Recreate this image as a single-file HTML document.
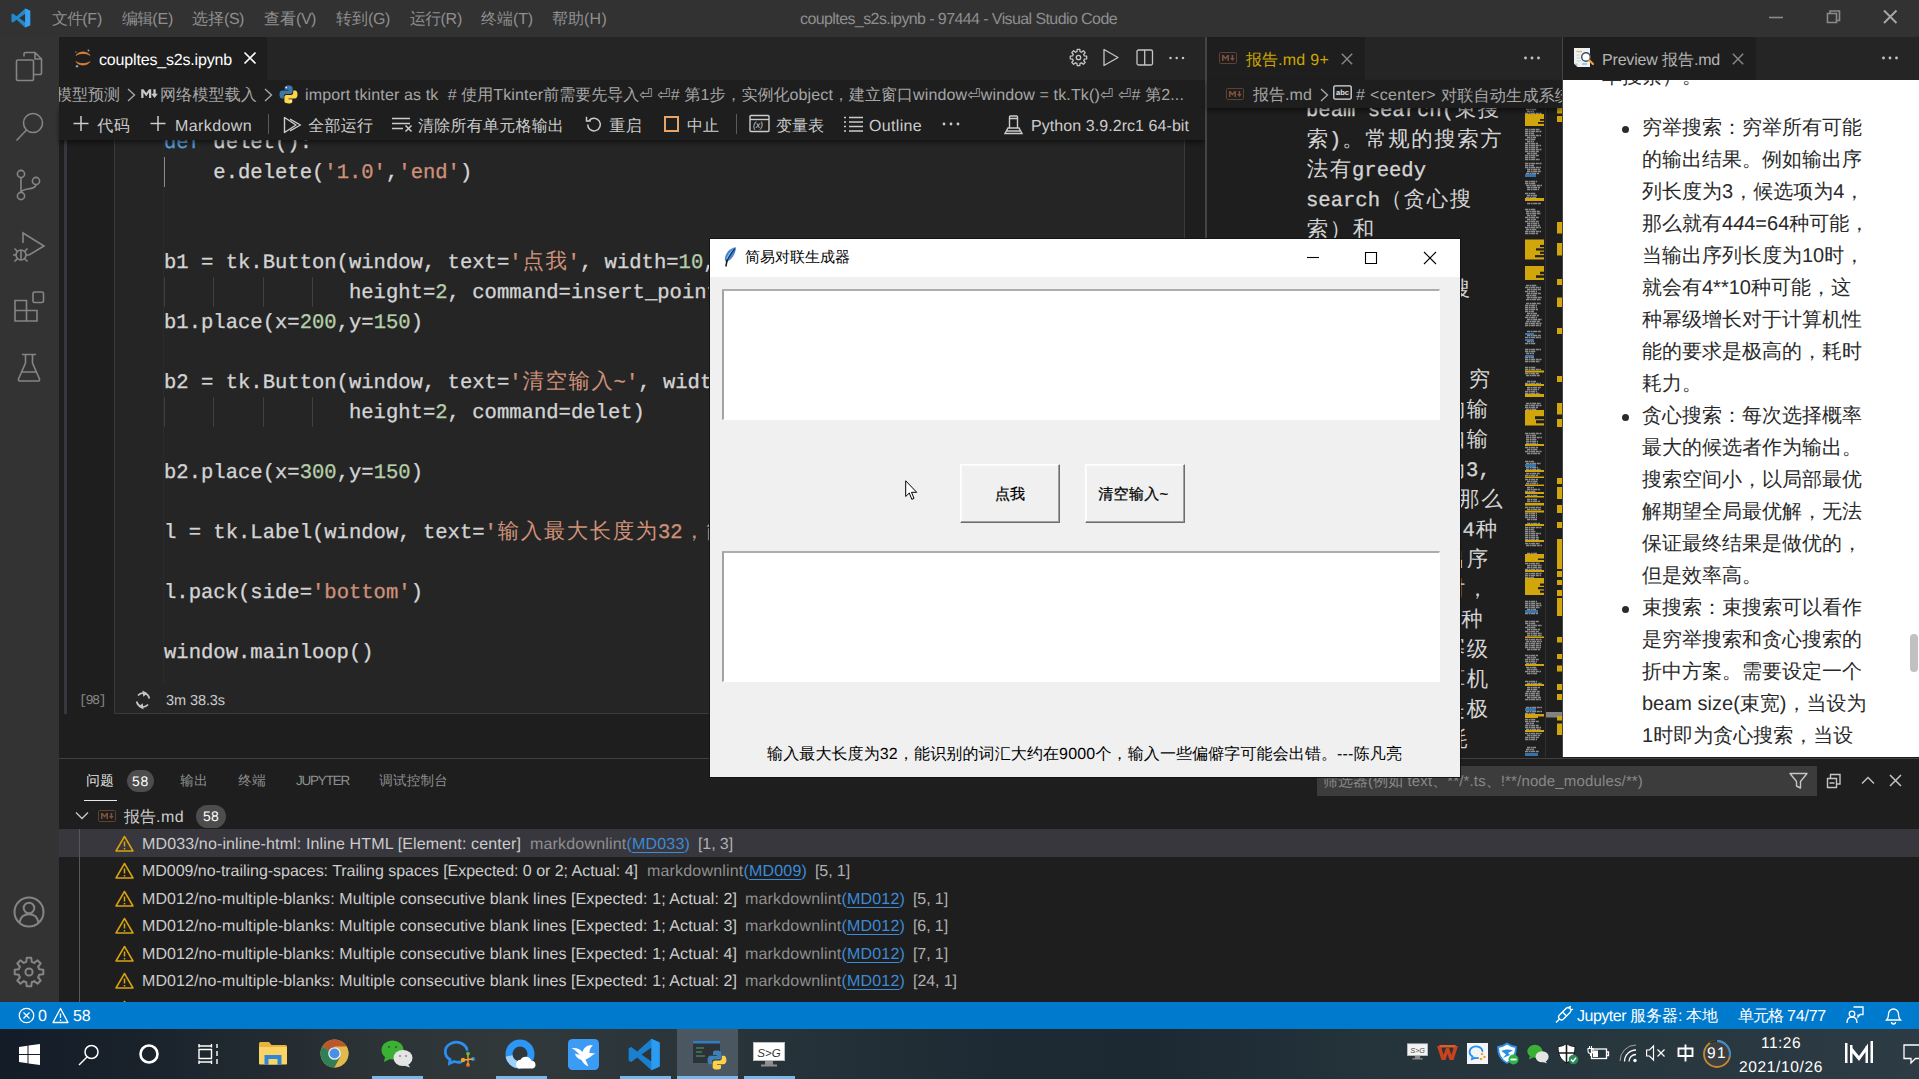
<!DOCTYPE html>
<html lang="zh">
<head>
<meta charset="utf-8">
<title>coupltes_s2s.ipynb - 97444 - Visual Studio Code</title>
<style>
*{box-sizing:border-box;margin:0;padding:0}
html,body{width:1919px;height:1079px;overflow:hidden;background:#1e1e1e}
body{font-family:"Liberation Sans",sans-serif;font-size:16px;color:#ccc;position:relative;text-rendering:geometricPrecision}
.abs{position:absolute}
.t{position:absolute;white-space:nowrap;line-height:1}
.mono{font-family:"Liberation Mono",monospace}
svg{position:absolute;overflow:visible}
/* ---------- major regions ---------- */
#titlebar{left:0;top:0;width:1919px;height:37px;background:#323233}
#activity{left:0;top:37px;width:59px;height:965px;background:#333333}
#g1tabs{left:59px;top:37px;width:1146px;height:43px;background:#252526}
#g1tab{left:59px;top:37px;width:208px;height:43px;background:#1e1e1e}
#g1crumb{left:59px;top:80px;width:1146px;height:28px;background:#1e1e1e}
#g1tool{left:59px;top:108px;width:1146px;height:32px;background:#1e1e1e}
#g1body{left:59px;top:140px;width:1146px;height:617px;background:#1e1e1e;overflow:hidden}
#g2tabs{left:1207px;top:37px;width:355px;height:43px;background:#252526}
#g2tab{left:1207px;top:37px;width:158px;height:43px;background:#1e1e1e}
#g2crumb{left:1207px;top:80px;width:355px;height:28px;background:#1e1e1e}
#g2body{left:1207px;top:108px;width:355px;height:649px;background:#1e1e1e;overflow:hidden}
#g3tabs{left:1563px;top:37px;width:356px;height:43px;background:#252526}
#g3tab{left:1563px;top:37px;width:193px;height:43px;background:#1e1e1e}
#g3body{left:1563px;top:80px;width:356px;height:677px;background:#ffffff;overflow:hidden}
#panel{left:59px;top:758px;width:1860px;height:244px;background:#1e1e1e;overflow:hidden}
#status{left:0;top:1002px;width:1919px;height:27px;background:#007acc}
#taskbar{left:0;top:1029px;width:1919px;height:50px;background:linear-gradient(90deg,#141c27 0,#1a222c 8%,#2c3437 20%,#30383a 27%,#27333a 40%,#1d2a33 52%,#1c2933 60%,#25333b 72%,#28363e 85%,#2c3b44 100%)}
#tk{left:710px;top:239px;width:750px;height:538px;background:#f0f0f0}
#tktitle{left:0;top:0;width:750px;height:38px;background:#ffffff}

.ui{font-size:16px}
.menu{color:#8e8e8e;font-size:16px;top:12px}
.ic{stroke:#858585;fill:none;stroke-width:1.6}
.tb{color:#cccccc;font-size:16px;top:119px}
.bc{color:#a6a6a6;font-size:16px;top:88px}

.cl{position:absolute;left:164px;white-space:pre;line-height:1;font-family:"Liberation Mono",monospace;font-size:20.55px;color:#d4d4d4;-webkit-text-stroke:.3px}
.cj{font-size:21.4px;line-height:0;-webkit-text-stroke:0}
.s{color:#ce9178}.n{color:#b5cea8}.k{color:#569cd6}.f{color:#dcdcaa}
.ig{position:absolute;width:1px;height:30px;background:#404040}

.pt{font-size:13.5px;color:#909090;top:774px}
.row{font-size:16px;color:#cccccc}
.src{color:#8f8f8f}
.lnk{color:#3d8ad6}.lnk u{text-decoration:underline;text-underline-offset:3px;text-decoration-thickness:1px}
.warn{width:19px;height:17px}
.sb{font-size:16px;color:#ffffff;top:1009px}

.run{position:absolute;top:1076px;height:3px;background:#76b9ed}
.tr{font-size:15.5px;color:#ffffff}

.tktxt{position:absolute;left:12px;width:718px;background:#ffffff;border-top:2px solid #adadad;border-left:2px solid #a3a3a3;border-right:1px solid #ffffff;border-bottom:1px solid #ffffff}
.tkbtn{position:absolute;top:225px;width:100px;height:59px;background:#f0f0f0;border:1px solid;border-color:#ffffff #6d6d6d #6d6d6d #ffffff;box-shadow:inset -1px -1px 0 #a0a0a0,inset 1px 1px 0 #fafafa}
.tkl{color:#000000;font-size:15px;-webkit-text-stroke:.25px}

.md{position:absolute;white-space:pre;line-height:1;font-family:"Liberation Mono",monospace;font-size:20.55px;color:#d4d4d4;-webkit-text-stroke:.3px}
.md .cj{font-size:21.4px;-webkit-text-stroke:0}
.pv{position:absolute;left:1642px;white-space:nowrap;line-height:1;font-size:20px;color:#2a2a2a}
.bul{position:absolute;left:1622px;width:7px;height:7px;border-radius:50%;background:#2a2a2a}

.c{display:inline-block;width:var(--cw,1em);text-align:center;font-weight:inherit;letter-spacing:0}
.cj .c{width:23px}
</style>
</head>
<body>
<div id="titlebar" class="abs">
  <svg style="left:11px;top:8px" width="20" height="20" viewBox="0 0 100 100"><path d="M71 2 L96 14 V86 L71 98 L28 59 L10 73 L2 69 V31 L10 27 L28 41 Z M71 29 L41 50 L71 71 Z" fill="#2489ca"/><path d="M71 2 L96 14 V86 L71 98 Z" fill="#3aa0f0"/></svg>
  <span class="t menu" style="left:52px;--cw:15.147px;letter-spacing:-0.244px"><b class="c">文</b><b class="c">件</b>(F)</span>
  <span class="t menu" style="left:122px;--cw:15.185px;letter-spacing:-0.233px"><b class="c">编</b><b class="c">辑</b>(E)</span>
  <span class="t menu" style="left:192px;letter-spacing:-0.443px"><b class="c">选</b><b class="c">择</b>(S)</span>
  <span class="t menu" style="left:264px;letter-spacing:-0.443px"><b class="c">查</b><b class="c">看</b>(V)</span>
  <span class="t menu" style="left:336px;letter-spacing:-0.370px"><b class="c">转</b><b class="c">到</b>(G)</span>
  <span class="t menu" style="left:410px;--cw:15.223px;letter-spacing:-0.222px"><b class="c">运</b><b class="c">行</b>(R)</span>
  <span class="t menu" style="left:481px;letter-spacing:-0.146px"><b class="c">终</b><b class="c">端</b>(T)</span>
  <span class="t menu" style="left:552px;letter-spacing:0.260px"><b class="c">帮</b><b class="c">助</b>(H)</span>
  <span class="t menu" style="left:800px;letter-spacing:-0.592px">coupltes_s2s.ipynb - 97444 - Visual Studio Code</span>
  <svg style="left:1769px;top:9px" width="130" height="16" viewBox="0 0 130 16" fill="none" stroke="#8a8a8a" stroke-width="1.600">
    <path d="M0 8.5 H14"/>
    <path d="M58.5 4.5 h9 v9 h-9 z M61 4.5 v-2.5 h9.5 v9.5 h-2.5"/>
    <path d="M115 1.5 l12.5 12.5 M127.5 1.5 l-12.5 12.5" stroke="#a8a8a8" stroke-width="1.900"/>
  </svg>
</div>
<div id="activity" class="abs">
  <!-- files -->
  <svg class="ic" style="left:15px;top:14px" width="28" height="32" viewBox="0 0 28 32"><path d="M9 5.5 V3 a1.5 1.5 0 0 1 1.5 -1.5 H20 L26.5 8 V22 a1.5 1.5 0 0 1 -1.5 1.5 H18.5 M20 1.5 V8 H26.5 M3 9 H17 a1.5 1.5 0 0 1 1.5 1.5 V28 a1.5 1.5 0 0 1 -1.5 1.5 H3 a1.5 1.5 0 0 1 -1.5 -1.5 V10.5 A1.5 1.5 0 0 1 3 9 Z"/></svg>
  <!-- search -->
  <svg class="ic" style="left:15px;top:75px" width="30" height="30" viewBox="0 0 30 30"><circle cx="18" cy="11" r="9.5"/><path d="M11.5 18 L1.5 28.5"/></svg>
  <!-- scm -->
  <svg class="ic" style="left:15px;top:131px" width="28" height="34" viewBox="0 0 28 34"><circle cx="6" cy="6" r="3.6"/><circle cx="6" cy="28" r="3.6"/><circle cx="21" cy="13" r="3.6"/><path d="M6 9.6 V24.4 M21 16.6 c0 6 -15 3 -15 8"/></svg>
  <!-- debug -->
  <svg class="ic" style="left:12px;top:194px" width="34" height="34" viewBox="0 0 34 34"><path d="M11 12 V2 L32 15 L17 24"/><circle cx="9" cy="24" r="5"/><path d="M9 19 V29 M1 24 H4 M14 24 H17 M2.5 17.5 L5.5 20.5 M15.5 17.5 L12.5 20.5 M2.5 30.5 L5.5 27.5 M15.5 30.5 L12.5 27.5"/></svg>
  <!-- extensions -->
  <svg class="ic" style="left:14px;top:254px" width="32" height="32" viewBox="0 0 32 32"><path d="M1 9.5 H12.5 V30 H1 Z M12.5 19.5 H23 V30 H12.5 M1 19.5 H12.5"/><rect x="19" y="1" width="10.5" height="10.5" rx="1.5"/></svg>
  <!-- testing flask -->
  <svg class="ic" style="left:17px;top:316px" width="24" height="30" viewBox="0 0 24 30"><path d="M5 1.5 H19 M8.5 1.5 V10 L1.5 26 a1.5 1.5 0 0 0 1.5 2 H21 a1.5 1.5 0 0 0 1.5 -2 L15.5 10 V1.5 M4.5 19 H19.5"/></svg>
  <!-- account -->
  <svg class="ic" style="left:13px;top:859px;stroke-width:2" width="32" height="32" viewBox="0 0 32 32"><circle cx="16" cy="16" r="14.500"/><circle cx="16" cy="12" r="5.300"/><path d="M6.500 26.500 c1 -5.500 4.500 -8.200 9.500 -8.200 s8.500 2.700 9.500 8.200"/></svg>
  <!-- gear -->
  <svg style="left:13px;top:956px;top:919px" width="32" height="32" viewBox="0 0 32 32"><path d="M13.28 5.86L13.73 1.68L18.27 1.68L18.72 5.86A10.5 10.5 0 0 1 21.25 6.91L24.52 4.27L27.73 7.48L25.09 10.75A10.5 10.5 0 0 1 26.14 13.28L30.32 13.73L30.32 18.27L26.14 18.72A10.5 10.5 0 0 1 25.09 21.25L27.73 24.52L24.52 27.73L21.25 25.09A10.5 10.5 0 0 1 18.72 26.14L18.27 30.32L13.73 30.32L13.28 26.14A10.5 10.5 0 0 1 10.75 25.09L7.48 27.73L4.27 24.52L6.91 21.25A10.5 10.5 0 0 1 5.86 18.72L1.68 18.27L1.68 13.73L5.86 13.28A10.5 10.5 0 0 1 6.91 10.75L4.27 7.48L7.48 4.27L10.75 6.91A10.5 10.5 0 0 1 13.28 5.86Z" fill="none" stroke="#858585" stroke-width="2" stroke-linejoin="round"/><circle cx="16" cy="16" r="3.600" fill="none" stroke="#858585" stroke-width="2"/></svg>
</div>

<div id="g1tabs" class="abs"></div>
<div id="g1tab" class="abs"></div>
<!-- jupyter icon -->
<svg style="left:74px;top:49px" width="18" height="19" viewBox="0 0 18 19" fill="none"><path d="M2 6.5 C4.500 1.800 13.500 1.800 16 6.500 C13 3.800 5 3.800 2 6.500 Z M2 12.500 C4.500 17.200 13.500 17.200 16 12.500 C13 15.200 5 15.200 2 12.500 Z" fill="#e8893a" stroke="#e8893a" stroke-width=".6"/><circle cx="14.500" cy="1.500" r="1" fill="#9a9a9a"/><circle cx="3" cy="17.300" r="1.200" fill="#9a9a9a"/><circle cx="2" cy="3" r=".7" fill="#9a9a9a"/></svg>
<span class="t" style="left:99px;top:53px;font-size:16px;color:#ffffff;letter-spacing:-0.172px">coupltes_s2s.ipynb</span>
<svg style="left:243px;top:51px" width="14" height="14" viewBox="0 0 14 14"><path d="M1.500 1.500 L12.500 12.500 M12.500 1.500 L1.500 12.500" stroke="#ffffff" stroke-width="1.700" fill="none"/></svg>
<!-- editor actions g1 -->
<svg style="left:1068px;top:46px" width="124" height="24" viewBox="0 0 124 24" fill="none" stroke="#c5c5c5" stroke-width="1.300">
  <path d="M8.95 5.70L9.20 3.30L11.80 3.30L12.05 5.70A6 6 0 0 1 13.50 6.30L15.38 4.79L17.21 6.62L15.70 8.50A6 6 0 0 1 16.30 9.95L18.70 10.20L18.70 12.80L16.30 13.05A6 6 0 0 1 15.70 14.50L17.21 16.38L15.38 18.21L13.50 16.70A6 6 0 0 1 12.05 17.30L11.80 19.70L9.20 19.70L8.95 17.30A6 6 0 0 1 7.50 16.70L5.62 18.21L3.79 16.38L5.30 14.50A6 6 0 0 1 4.70 13.05L2.30 12.80L2.30 10.20L4.70 9.95A6 6 0 0 1 5.30 8.50L3.79 6.62L5.62 4.79L7.50 6.30A6 6 0 0 1 8.95 5.70Z" stroke-width="1.300" stroke-linejoin="round"/><circle cx="10.500" cy="11.500" r="2.200" stroke-width="1.300"/>
  <path d="M36 3.500 V19.500 L50 11.500 Z" stroke-linejoin="round"/>
  <rect x="69" y="4" width="15.500" height="15" rx="1.500"/><path d="M76.700 4 V19"/>
  <circle cx="102.500" cy="12" r="1.250" fill="#c5c5c5" stroke="none"/><circle cx="108.700" cy="12" r="1.250" fill="#c5c5c5" stroke="none"/><circle cx="115" cy="12" r="1.250" fill="#c5c5c5" stroke="none"/>
</svg>
<div id="g1crumb" class="abs" style="overflow:hidden">
</div>
<div class="abs" style="left:59px;top:80px;width:61px;height:28px;overflow:hidden"><span class="t bc" style="left:-3px;top:8px;--cw:16.000px"><b class="c">模</b><b class="c">型</b><b class="c">预</b><b class="c">测</b></span></div>
<svg style="left:125px;top:87px" width="12" height="16" viewBox="0 0 12 16"><path d="M3 2 L9.500 8 L3 14" stroke="#a6a6a6" stroke-width="1.400" fill="none"/></svg>
<svg style="left:139px;top:87px" width="20" height="13.300" viewBox="0 0 18 12"><path d="M2 10 V2 H4 L6.500 5.500 L9 2 H11 V10 H9 V5 L6.500 8.500 L4 5 V10 Z M13 2 H15 V6 H17 L14 10 L11 6 H13 Z" fill="#c8c8c8"/></svg>
<span class="t bc" style="left:160px;--cw:16.167px"><b class="c">网</b><b class="c">络</b><b class="c">模</b><b class="c">型</b><b class="c">载</b><b class="c">入</b></span>
<svg style="left:262px;top:87px" width="12" height="16" viewBox="0 0 12 16"><path d="M3 2 L9.500 8 L3 14" stroke="#a6a6a6" stroke-width="1.400" fill="none"/></svg>
<!-- python icon -->
<svg style="left:279px;top:85px" width="19" height="19" viewBox="0 0 19 19"><path d="M9.300 0.500 C5.500 0.500 5.700 2.200 5.700 2.200 V4.700 H9.500 V5.500 H3.500 C3.500 5.500 0.500 5.200 0.500 9.500 C0.500 13.800 3.100 13.600 3.100 13.600 H4.800 V11.500 C4.800 11.500 4.700 9 7.300 9 H11.200 C11.200 9 13.600 9 13.600 6.700 V2.900 C13.600 2.900 14 0.500 9.300 0.500 Z" fill="#3b77a8"/><circle cx="7.300" cy="2.600" r=".8" fill="#fff"/><path d="M9.700 18.500 C13.500 18.500 13.300 16.800 13.300 16.800 V14.300 H9.500 V13.500 H15.500 C15.500 13.500 18.500 13.800 18.500 9.500 C18.500 5.200 15.900 5.400 15.900 5.400 H14.200 V7.500 C14.200 7.500 14.300 10 11.700 10 H7.800 C7.800 10 5.400 10 5.400 12.300 V16.100 C5.400 16.100 5 18.500 9.700 18.500 Z" fill="#fdd547"/><circle cx="11.700" cy="16.400" r=".8" fill="#fff"/></svg>
<span class="t bc" style="left:305px;letter-spacing:0.139px">import tkinter as tk&nbsp; # <b class="c">使</b><b class="c">用</b>Tkinter<b class="c">前</b><b class="c">需</b><b class="c">要</b><b class="c">先</b><b class="c">导</b><b class="c">入</b>⏎ ⏎# <b class="c">第</b>1<b class="c">步</b><b class="c">，</b><b class="c">实</b><b class="c">例</b><b class="c">化</b>object<b class="c">，</b><b class="c">建</b><b class="c">立</b><b class="c">窗</b><b class="c">口</b>window⏎window = tk.Tk()⏎ ⏎# <b class="c">第</b>2...</span>
<div id="g1body" class="abs">
  <div class="abs" style="left:5px;top:0;width:3px;height:574px;background:#37373d"></div>
  <div class="abs" style="left:55px;top:-1px;width:1071px;height:575px;background:#252526;border:1px solid #3a3a3c"></div>
  <div class="abs" style="left:104px;top:0;width:1px;height:545px;background:#2b2b2c"></div>
</div>
<div class="cl" style="top:134px"><span class="k">def</span> delet():</div>
<div class="cl" style="top:164px">    e.delete(<span class="s">'1.0'</span>,<span class="s">'end'</span>)</div>
<div class="cl" style="top:254px">b1 = tk.Button(window, text=<span class="s">'<span class="cj"><b class="c">点</b><b class="c">我</b></span>'</span>, width=<span class="n">10</span>,</div>
<div class="cl" style="top:284px">               height=<span class="n">2</span>, command=insert_point)</div>
<div class="cl" style="top:314px">b1.place(x=<span class="n">200</span>,y=<span class="n">150</span>)</div>
<div class="cl" style="top:374px">b2 = tk.Button(window, text=<span class="s">'<span class="cj"><b class="c">清</b><b class="c">空</b><b class="c">输</b><b class="c">入</b></span>~'</span>, width=<span class="n">10</span>,</div>
<div class="cl" style="top:404px">               height=<span class="n">2</span>, command=delet)</div>
<div class="cl" style="top:464px">b2.place(x=<span class="n">300</span>,y=<span class="n">150</span>)</div>
<div class="cl" style="top:524px">l = tk.Label(window, text=<span class="s">'<span class="cj"><b class="c">输</b><b class="c">入</b><b class="c">最</b><b class="c">大</b><b class="c">长</b><b class="c">度</b><b class="c">为</b></span>32<span class="cj"><b class="c">，</b><b class="c">能</b><b class="c">识</b><b class="c">别</b><b class="c">的</b><b class="c">词</b><b class="c">汇</b><b class="c">大</b><b class="c">约</b><b class="c">在</b></span>9000<span class="cj"><b class="c">个</b></span>'</span>)</div>
<div class="cl" style="top:584px">l.pack(side=<span class="s">'bottom'</span>)</div>
<div class="cl" style="top:644px">window.mainloop()</div>
<div class="ig" style="left:164px;top:157px;background:#8a8a8a"></div>
<div class="ig" style="left:164px;top:277px"></div>
<div class="ig" style="left:213px;top:277px"></div>
<div class="ig" style="left:263px;top:277px"></div>
<div class="ig" style="left:312px;top:277px"></div>
<div class="ig" style="left:164px;top:397px"></div>
<div class="ig" style="left:213px;top:397px"></div>
<div class="ig" style="left:263px;top:397px"></div>
<div class="ig" style="left:312px;top:397px"></div>
<span class="t mono" style="left:79px;top:695px;font-size:13.5px;color:#858585;letter-spacing:-1.602px">[98]</span>
<svg style="left:134px;top:690px" width="18" height="20" viewBox="0 0 18 20" fill="none" stroke="#c5c5c5" stroke-width="1.800"><path d="M15.300 8.500 A6.500 6.500 0 0 0 4 5.500 M2.700 11.500 A6.500 6.500 0 0 0 14 14.500"/><path d="M8.500 .5 L13.500 3.200 L9.300 6.800 Z M9.500 19.500 L4.500 16.800 L8.700 13.200 Z" fill="#c5c5c5" stroke="none"/></svg>
<span class="t" style="left:166px;top:694px;font-size:14.500px;color:#cccccc;letter-spacing:-0.082px">3m 38.3s</span>
<div id="g1tool" class="abs" style="box-shadow:0 3px 4px rgba(0,0,0,.45)"></div>
<svg style="left:73px;top:115px" width="100" height="18" viewBox="0 0 100 18" stroke="#cccccc" stroke-width="1.500" fill="none"><path d="M8 1 V16 M.5 8.500 H15.500 M85 1 V16 M77.500 8.500 H92.500"/></svg>
<span class="t tb" style="left:97px;--cw:16.500px"><b class="c">代</b><b class="c">码</b></span>
<span class="t tb" style="left:175px;letter-spacing:0.398px">Markdown</span>
<div class="abs" style="left:268px;top:114px;width:1px;height:20px;background:#5a5a5a"></div>
<svg style="left:283px;top:115.500px" width="20" height="18" viewBox="0 0 20 18" stroke="#cccccc" stroke-width="1.400" fill="none" stroke-linejoin="round"><path d="M1.500 1.500 V16.500 L13 9 Z M7 3.200 L17.500 9 L7 14.800"/></svg>
<span class="t tb" style="left:308px;--cw:16.250px"><b class="c">全</b><b class="c">部</b><b class="c">运</b><b class="c">行</b></span>
<svg style="left:392px;top:117px" width="21" height="15" viewBox="0 0 21 15" stroke="#cccccc" stroke-width="1.500" fill="none"><path d="M0 1.500 H18 M0 6.500 H18 M0 11.500 H11 M13.500 8.500 L19.500 14.500 M19.500 8.500 L13.500 14.500"/></svg>
<span class="t tb" style="left:418px;--cw:16.222px"><b class="c">清</b><b class="c">除</b><b class="c">所</b><b class="c">有</b><b class="c">单</b><b class="c">元</b><b class="c">格</b><b class="c">输</b><b class="c">出</b></span>
<svg style="left:585px;top:115px" width="18" height="18" viewBox="0 0 18 18" stroke="#cccccc" stroke-width="1.500" fill="none"><path d="M4.200 5.500 A6.300 6.300 0 1 1 2.700 9.500 M1.500 1.800 V6 H5.800"/></svg>
<span class="t tb" style="left:609px;--cw:16.500px"><b class="c">重</b><b class="c">启</b></span>
<div class="abs" style="left:664px;top:116px;width:15px;height:16px;border:2px solid #e9a46a"></div>
<span class="t tb" style="left:687px;--cw:16.000px"><b class="c">中</b><b class="c">止</b></span>
<div class="abs" style="left:736px;top:114px;width:1px;height:20px;background:#5a5a5a"></div>
<svg style="left:749px;top:114px" width="21" height="19" viewBox="0 0 21 19" stroke="#cccccc" stroke-width="1.400" fill="none"><rect x="1" y="1.500" width="19" height="16" rx="1"/><path d="M1 5.500 H20"/></svg>
<span class="t" style="left:753px;top:121px;font-size:9px;color:#cccccc;font-style:italic;letter-spacing:-.3px">(x)</span>
<span class="t tb" style="left:776px;--cw:16.000px"><b class="c">变</b><b class="c">量</b><b class="c">表</b></span>
<svg style="left:844px;top:116px" width="19" height="16" viewBox="0 0 19 16" stroke="#cccccc" stroke-width="1.500" fill="none"><path d="M0 1.500 H2 M5 1.500 H19 M0 6 H2 M5 6 H19 M0 10.500 H2 M5 10.500 H19 M0 15 H2 M5 15 H19"/></svg>
<span class="t tb" style="left:869px;letter-spacing:0.328px">Outline</span>
<svg style="left:942px;top:121px" width="20" height="6" viewBox="0 0 20 6" fill="#cccccc"><circle cx="2" cy="3" r="1.400"/><circle cx="9" cy="3" r="1.400"/><circle cx="16" cy="3" r="1.400"/></svg>
<svg style="left:1004px;top:115px" width="19" height="20" viewBox="0 0 19 20" stroke="#cccccc" stroke-width="1.400" fill="none"><path d="M5.500 13 V2 a1 1 0 0 1 1 -1 H12.500 a1 1 0 0 1 1 1 V13 M5.500 3.500 H13.500 M4 13 H15 L18 18.500 H1 Z M3 16 H16"/></svg>
<span class="t tb" style="left:1031px;letter-spacing:0.066px">Python 3.9.2rc1 64-bit</span>

<div class="abs" style="left:1205px;top:37px;width:2px;height:720px;background:#444444"></div>
<div id="g2tabs" class="abs"></div>
<div id="g2tab" class="abs"></div>
<svg style="left:1219px;top:52px" width="18" height="12" viewBox="0 0 18 12"><rect x=".5" y=".5" width="17" height="11" rx="1" fill="none" stroke="#5f4234"/><path d="M3 9 V3 H4.600 L6.500 5.600 L8.400 3 H10 V9 H8.500 V5.300 L6.500 7.800 L4.500 5.300 V9 Z M12.600 3 H14.200 V6 H15.800 L13.400 9 L11 6 H12.600 Z" fill="#7d523d"/></svg>
<span class="t" style="left:1246px;top:52.500px;font-size:16px;color:#cca700;letter-spacing:0.273px"><b class="c">报</b><b class="c">告</b>.md 9+</span>
<svg style="left:1341px;top:53px" width="12" height="12" viewBox="0 0 12 12"><path d="M.8 .8 L11.200 11.200 M11.200 .8 L.8 11.200" stroke="#8a8a8a" stroke-width="1.400" fill="none"/></svg>
<svg style="left:1523px;top:55px" width="20" height="6" viewBox="0 0 20 6" fill="#c5c5c5"><circle cx="2.500" cy="3" r="1.400"/><circle cx="9" cy="3" r="1.400"/><circle cx="15.500" cy="3" r="1.400"/></svg>
<div id="g2body" class="abs">
  <div class="abs" style="left:318px;top:0;width:20px;height:649px;background:#1e1e1e"></div>
</div>
<div class="md" style="left:1306px;top:102px">beam search(<span class="cj"><b class="c">束</b><b class="c">搜</b></span></div>
<div class="md" style="left:1306px;top:132px"><span class="cj"><b class="c">索</b></span>)<span class="cj"><b class="c">。</b><b class="c">常</b><b class="c">规</b><b class="c">的</b><b class="c">搜</b><b class="c">索</b><b class="c">方</b></span></div>
<div class="md" style="left:1306px;top:162px"><span class="cj"><b class="c">法</b><b class="c">有</b></span>greedy</div>
<div class="md" style="left:1306px;top:192px">search<span class="cj"><b class="c">（</b><b class="c">贪</b><b class="c">心</b><b class="c">搜</b></span></div>
<div class="md" style="left:1306px;top:222px"><span class="cj"><b class="c">索</b><b class="c">）</b><b class="c">和</b></span></div>
<div class="md" style="left:1448px;top:282px"><span class="cj"><b class="c">搜</b></span></div>
<div class="md" style="left:1468px;top:372px"><span class="cj"><b class="c">穷</b></span></div>
<div class="md" style="left:1443px;top:402px"><span class="cj"><b class="c">的</b><b class="c">输</b></span></div>
<div class="md" style="left:1443px;top:432px"><span class="cj"><b class="c">如</b><b class="c">输</b></span></div>
<div class="md" style="left:1443px;top:462px"><span class="cj"><b class="c">为</b></span>3,</div>
<div class="md" style="left:1457.5px;top:492px"><span class="cj"><b class="c">那</b><b class="c">么</b></span></div>
<div class="md" style="left:1462.5px;top:522px">4<span class="cj"><b class="c">种</b></span></div>
<div class="md" style="left:1443px;top:552px"><span class="cj"><b class="c">出</b><b class="c">序</b></span></div>
<div class="md" style="left:1443px;top:582px"><span class="cj"><b class="c">时</b><b class="c">，</b></span></div>
<div class="md" style="left:1460.5px;top:612px"><span class="cj"><b class="c">种</b></span></div>
<div class="md" style="left:1443px;top:642px"><span class="cj"><b class="c">幂</b><b class="c">级</b></span></div>
<div class="md" style="left:1443px;top:672px"><span class="cj"><b class="c">算</b><b class="c">机</b></span></div>
<div class="md" style="left:1443px;top:702px"><span class="cj"><b class="c">是</b><b class="c">极</b></span></div>
<div class="md" style="left:1446px;top:732px"><span class="cj"><b class="c">耗</b></span></div>
<svg style="left:1525px;top:108px" width="19" height="649" viewBox="0 0 19 649"><path d="M1 1.5h11M2 3.5h7M0 5.5h17M0 21.5h15M0 23.5h17M0 25.5h9M0 27.5h16M2 29.5h9M0 31.5h11M2 33.5h7M0 35.5h13M0 37.5h16M0 39.5h13M0 41.5h17M0 43.5h14M2 45.5h10M0 47.5h14M0 49.5h11M0 51.5h15M0 55.5h17M0 57.5h9M0 59.5h16M2 61.5h13M2 63.5h14M1 65.5h13M0 73.5h12M0 75.5h11M1 77.5h16M2 79.5h13M2 81.5h12M0 85.5h11M2 87.5h10M1 89.5h11M2 95.5h14M0 101.5h11M1 103.5h14M1 105.5h15M2 107.5h9M0 109.5h14M2 111.5h9M0 113.5h14M2 115.5h12M2 117.5h13M0 119.5h16M1 121.5h11M0 123.5h16M0 125.5h13M1 177.5h11M0 179.5h16M2 181.5h14M0 183.5h12M2 185.5h14M1 187.5h11M2 189.5h15M1 191.5h15M1 195.5h15M0 197.5h12M0 199.5h12M0 201.5h13M0 203.5h9M2 205.5h10M1 207.5h13M0 209.5h12M2 211.5h15M1 213.5h14M0 215.5h17M0 217.5h16M2 223.5h14M2 227.5h14M0 229.5h16M2 233.5h7M0 235.5h11M0 241.5h16M0 243.5h11M1 245.5h8M0 249.5h9M0 251.5h17M0 253.5h15M0 259.5h11M0 261.5h16M0 265.5h14M1 267.5h14M2 273.5h9M0 275.5h16M2 279.5h14M2 281.5h12M0 283.5h12M0 285.5h15M1 295.5h15M0 297.5h17M0 299.5h13M1 301.5h11M0 325.5h17M1 327.5h10M1 329.5h16M1 331.5h11M1 333.5h12M1 335.5h12M0 339.5h13M2 341.5h11M0 343.5h17M2 345.5h13M0 353.5h9M1 355.5h15M1 359.5h12M1 361.5h15M1 365.5h14M0 367.5h13M0 371.5h13M2 373.5h11M1 375.5h12M2 379.5h7M2 381.5h13M0 383.5h11M2 387.5h11M2 391.5h10M2 393.5h13M0 399.5h16M2 401.5h14M0 405.5h12M0 407.5h12M0 409.5h12M2 411.5h10M2 415.5h13M0 419.5h17M0 421.5h9M0 423.5h11M0 425.5h16M0 427.5h13M0 429.5h14M0 431.5h14M0 435.5h15M1 437.5h16M2 445.5h10M0 455.5h15M2 457.5h15M2 459.5h15M0 461.5h17M0 465.5h17M0 467.5h16M0 469.5h9M0 493.5h12M0 495.5h16M0 497.5h17M0 499.5h15M2 501.5h9M0 505.5h13M0 513.5h14M0 515.5h11M2 517.5h15M0 519.5h11M2 521.5h13M0 523.5h14M2 525.5h15M2 527.5h15M0 531.5h17M1 533.5h16M0 535.5h16M0 537.5h16M0 539.5h16M2 541.5h13M0 547.5h13M2 549.5h9M0 551.5h14M0 553.5h12M1 555.5h11M1 559.5h11M2 561.5h11M0 563.5h16M2 565.5h10M0 573.5h12M2 575.5h15M2 579.5h13M2 581.5h11M1 583.5h14M0 585.5h15M0 587.5h15M2 589.5h14M0 591.5h16M1 599.5h16M1 603.5h16M0 605.5h11M0 611.5h11M0 613.5h14M1 615.5h8M0 617.5h14M0 619.5h16M1 621.5h15M0 625.5h17M2 627.5h13M0 629.5h14M0 631.5h12M2 639.5h9M1 641.5h8M0 643.5h14" stroke="#bcbcbc" stroke-opacity=".7" stroke-width="1.500" stroke-dasharray="3 .6 2 .5 4 .7" fill="none"/><rect x="0" y="6" width="19" height="12" fill="#d0a60c"/><rect x="15" y="11.0" width="4" height="1.8" fill="#1e1e1e"/><rect x="13" y="14.0" width="6" height="1.8" fill="#1e1e1e"/><rect x="0" y="90" width="19" height="3" fill="#d0a60c"/><rect x="0" y="131.5" width="19" height="20.0" fill="#d0a60c"/><rect x="15" y="136.9" width="4" height="2.2" fill="#1e1e1e"/><rect x="11" y="140.3" width="8" height="2.2" fill="#1e1e1e"/><rect x="15" y="143.7" width="4" height="2.2" fill="#1e1e1e"/><rect x="10" y="147.1" width="9" height="2.2" fill="#1e1e1e"/><rect x="0" y="158" width="19" height="14" fill="#d0a60c"/><rect x="15" y="163.7" width="4" height="2.5" fill="#1e1e1e"/><rect x="11" y="167.3" width="8" height="2.5" fill="#1e1e1e"/><rect x="0" y="262.5" width="19" height="2.0" fill="#d0a60c"/><rect x="0" y="276" width="19" height="2" fill="#d0a60c"/><rect x="0" y="286" width="19" height="3" fill="#d0a60c"/><rect x="0" y="302" width="19" height="15.5" fill="#d0a60c"/><rect x="10" y="308.2" width="9" height="3.0" fill="#1e1e1e"/><rect x="11" y="312.3" width="8" height="3.0" fill="#1e1e1e"/><rect x="0" y="336" width="19" height="2" fill="#d0a60c"/><rect x="0" y="362" width="19" height="2" fill="#d0a60c"/><rect x="0" y="368.5" width="19" height="1.5" fill="#d0a60c"/><rect x="0" y="376.5" width="19" height="1.5" fill="#d0a60c"/><rect x="0" y="384" width="19" height="2" fill="#d0a60c"/><rect x="0" y="388" width="19" height="1.5" fill="#d0a60c"/><rect x="0" y="395" width="19" height="2.5" fill="#d0a60c"/><rect x="0" y="402.5" width="19" height="2.0" fill="#d0a60c"/><rect x="0" y="416" width="19" height="2" fill="#d0a60c"/><rect x="0" y="432" width="19" height="2" fill="#d0a60c"/><rect x="0" y="446" width="19" height="8" fill="#d0a60c"/><rect x="13" y="450.5" width="6" height="1.5" fill="#1e1e1e"/><rect x="0" y="462" width="19" height="2" fill="#d0a60c"/><rect x="0" y="470" width="19" height="17" fill="#d0a60c"/><rect x="15" y="475.5" width="4" height="2.3" fill="#1e1e1e"/><rect x="13" y="479.0" width="6" height="2.3" fill="#1e1e1e"/><rect x="15" y="482.5" width="4" height="2.3" fill="#1e1e1e"/><rect x="0" y="528.5" width="19" height="1.5" fill="#d0a60c"/><rect x="0" y="556" width="19" height="2" fill="#d0a60c"/><rect x="0" y="576" width="19" height="2" fill="#d0a60c"/><rect x="0" y="606" width="19" height="4" fill="#d0a60c"/><rect x="13" y="608.5" width="6" height="1.5" fill="#1e1e1e"/><rect x="0" y="622" width="19" height="2" fill="#d0a60c"/><rect x="0" y="66" width="11" height="3" fill="#3b82c4" fill-opacity=".85"/><rect x="0" y="225" width="9" height="2" fill="#3b82c4" fill-opacity=".85"/><rect x="0" y="231" width="9" height="2" fill="#3b82c4" fill-opacity=".85"/><rect x="0" y="247" width="9" height="2" fill="#3b82c4" fill-opacity=".85"/><rect x="0" y="356" width="11" height="3" fill="#3b82c4" fill-opacity=".85"/><rect x="0" y="502" width="13" height="3" fill="#3b82c4" fill-opacity=".85"/><rect x="0" y="600" width="11" height="3" fill="#3b82c4" fill-opacity=".85"/><rect x="0" y="645" width="13" height="3" fill="#3b82c4" fill-opacity=".85"/></svg>
<div class="abs" style="left:1545px;top:108px;width:1px;height:649px;background:#303031"></div>
<svg style="left:1545px;top:108px" width="17" height="649" viewBox="0 0 17 649"><rect x="1" y="604" width="16" height="5.500" fill="#9a9a9a" fill-opacity=".8"/><rect x="12" y="0" width="5" height="5.5" fill="#d0a60c"/><rect x="12" y="8" width="5" height="6" fill="#d0a60c"/><rect x="12" y="114" width="5" height="11.5" fill="#d0a60c"/><rect x="12" y="135" width="5" height="12.5" fill="#d0a60c"/><rect x="12" y="171" width="5" height="6" fill="#d0a60c"/><rect x="12" y="189.5" width="5" height="9.5" fill="#d0a60c"/><rect x="12" y="220" width="5" height="6" fill="#d0a60c"/><rect x="12" y="268" width="5" height="6" fill="#d0a60c"/><rect x="12" y="295" width="5" height="11.5" fill="#d0a60c"/><rect x="12" y="311" width="5" height="8" fill="#d0a60c"/><rect x="12" y="370" width="5" height="6" fill="#d0a60c"/><rect x="12" y="379" width="5" height="12" fill="#d0a60c"/><rect x="12" y="397" width="5" height="8" fill="#d0a60c"/><rect x="12" y="414" width="5" height="6" fill="#d0a60c"/><rect x="12" y="431" width="5" height="30" fill="#d0a60c"/><rect x="12" y="463" width="5" height="6" fill="#d0a60c"/><rect x="12" y="472" width="5" height="5" fill="#d0a60c"/><rect x="12" y="482" width="5" height="6" fill="#d0a60c"/><rect x="12" y="490" width="5" height="18" fill="#d0a60c"/><rect x="12" y="529" width="5" height="5.5" fill="#d0a60c"/><rect x="12" y="546" width="5" height="5" fill="#d0a60c"/><rect x="12" y="557.5" width="5" height="6.0" fill="#d0a60c"/><rect x="12" y="576" width="5" height="6" fill="#d0a60c"/><rect x="12" y="586" width="5" height="6" fill="#d0a60c"/><rect x="12" y="608" width="5" height="4.5" fill="#d0a60c"/><rect x="12" y="615.5" width="5" height="11.5" fill="#d0a60c"/></svg>
<div id="g2crumb" class="abs" style="box-shadow:0 3px 4px rgba(0,0,0,.45)"></div>
<svg style="left:1226px;top:88px" width="18" height="12" viewBox="0 0 18 12"><rect x=".5" y=".5" width="17" height="11" rx="1" fill="none" stroke="#5f4234"/><path d="M3 9 V3 H4.600 L6.500 5.600 L8.400 3 H10 V9 H8.500 V5.300 L6.500 7.800 L4.500 5.300 V9 Z M12.600 3 H14.200 V6 H15.800 L13.400 9 L11 6 H12.600 Z" fill="#7d523d"/></svg>
<span class="t bc" style="left:1253px;letter-spacing:0.109px"><b class="c">报</b><b class="c">告</b>.md</span>
<svg style="left:1318px;top:87px" width="12" height="16" viewBox="0 0 12 16"><path d="M3 2 L9.500 8 L3 14" stroke="#a6a6a6" stroke-width="1.400" fill="none"/></svg>
<svg style="left:1333px;top:85px" width="19" height="15" viewBox="0 0 19 15"><rect x=".8" y=".8" width="17.400" height="13.400" rx="1.500" fill="none" stroke="#e0e0e0" stroke-width="1.300"/><text x="9.500" y="9.800" text-anchor="middle" font-family="Liberation Sans, sans-serif" font-size="7.500" font-weight="bold" fill="#e0e0e0">abc</text></svg>
<div class="abs" style="left:1356px;top:80px;width:206px;height:28px;overflow:hidden"><span class="t bc" style="left:0;top:8px;letter-spacing:0.350px"># &lt;center&gt;</span><span class="t bc" style="left:85px;top:8px;font-size:16.250px"><b class="c">对</b><b class="c">联</b><b class="c">自</b><b class="c">动</b><b class="c">生</b><b class="c">成</b><b class="c">系</b><b class="c">统</b><b class="c">设</b><b class="c">计</b><b class="c">与</b><b class="c">实</b><b class="c">现</b></span></div>

<div class="abs" style="left:1562px;top:37px;width:1px;height:720px;background:#444444"></div>
<div id="g3body" class="abs">
  <div class="abs" style="left:347px;top:554px;width:8px;height:38px;border-radius:4px;background:#c1c1c1"></div>
</div>
<div class="pv" style="top:67px;left:1602px"><b class="c">单</b><b class="c">搜</b><b class="c">索</b><b class="c">）</b><b class="c">。</b></div>
<div class="pv" style="top:118px"><b class="c">穷</b><b class="c">举</b><b class="c">搜</b><b class="c">索</b><b class="c">：</b><b class="c">穷</b><b class="c">举</b><b class="c">所</b><b class="c">有</b><b class="c">可</b><b class="c">能</b></div>
<div class="bul" style="top:126px"></div>
<div class="pv" style="top:150px"><b class="c">的</b><b class="c">输</b><b class="c">出</b><b class="c">结</b><b class="c">果</b><b class="c">。</b><b class="c">例</b><b class="c">如</b><b class="c">输</b><b class="c">出</b><b class="c">序</b></div>
<div class="pv" style="top:182px"><b class="c">列</b><b class="c">长</b><b class="c">度</b><b class="c">为</b>3<b class="c">，</b><b class="c">候</b><b class="c">选</b><b class="c">项</b><b class="c">为</b>4<b class="c">，</b></div>
<div class="pv" style="top:214px"><b class="c">那</b><b class="c">么</b><b class="c">就</b><b class="c">有</b>4<i>4</i>4=64<b class="c">种</b><b class="c">可</b><b class="c">能</b><b class="c">，</b></div>
<div class="pv" style="top:246px"><b class="c">当</b><b class="c">输</b><b class="c">出</b><b class="c">序</b><b class="c">列</b><b class="c">长</b><b class="c">度</b><b class="c">为</b>10<b class="c">时</b><b class="c">，</b></div>
<div class="pv" style="top:278px"><b class="c">就</b><b class="c">会</b><b class="c">有</b>4**10<b class="c">种</b><b class="c">可</b><b class="c">能</b><b class="c">，</b><b class="c">这</b></div>
<div class="pv" style="top:310px"><b class="c">种</b><b class="c">幂</b><b class="c">级</b><b class="c">增</b><b class="c">长</b><b class="c">对</b><b class="c">于</b><b class="c">计</b><b class="c">算</b><b class="c">机</b><b class="c">性</b></div>
<div class="pv" style="top:342px"><b class="c">能</b><b class="c">的</b><b class="c">要</b><b class="c">求</b><b class="c">是</b><b class="c">极</b><b class="c">高</b><b class="c">的</b><b class="c">，</b><b class="c">耗</b><b class="c">时</b></div>
<div class="pv" style="top:374px"><b class="c">耗</b><b class="c">力</b><b class="c">。</b></div>
<div class="pv" style="top:406px"><b class="c">贪</b><b class="c">心</b><b class="c">搜</b><b class="c">索</b><b class="c">：</b><b class="c">每</b><b class="c">次</b><b class="c">选</b><b class="c">择</b><b class="c">概</b><b class="c">率</b></div>
<div class="bul" style="top:414px"></div>
<div class="pv" style="top:438px"><b class="c">最</b><b class="c">大</b><b class="c">的</b><b class="c">候</b><b class="c">选</b><b class="c">者</b><b class="c">作</b><b class="c">为</b><b class="c">输</b><b class="c">出</b><b class="c">。</b></div>
<div class="pv" style="top:470px"><b class="c">搜</b><b class="c">索</b><b class="c">空</b><b class="c">间</b><b class="c">小</b><b class="c">，</b><b class="c">以</b><b class="c">局</b><b class="c">部</b><b class="c">最</b><b class="c">优</b></div>
<div class="pv" style="top:502px"><b class="c">解</b><b class="c">期</b><b class="c">望</b><b class="c">全</b><b class="c">局</b><b class="c">最</b><b class="c">优</b><b class="c">解</b><b class="c">，</b><b class="c">无</b><b class="c">法</b></div>
<div class="pv" style="top:534px"><b class="c">保</b><b class="c">证</b><b class="c">最</b><b class="c">终</b><b class="c">结</b><b class="c">果</b><b class="c">是</b><b class="c">做</b><b class="c">优</b><b class="c">的</b><b class="c">，</b></div>
<div class="pv" style="top:566px"><b class="c">但</b><b class="c">是</b><b class="c">效</b><b class="c">率</b><b class="c">高</b><b class="c">。</b></div>
<div class="pv" style="top:598px"><b class="c">束</b><b class="c">搜</b><b class="c">索</b><b class="c">：</b><b class="c">束</b><b class="c">搜</b><b class="c">索</b><b class="c">可</b><b class="c">以</b><b class="c">看</b><b class="c">作</b></div>
<div class="bul" style="top:606px"></div>
<div class="pv" style="top:630px"><b class="c">是</b><b class="c">穷</b><b class="c">举</b><b class="c">搜</b><b class="c">索</b><b class="c">和</b><b class="c">贪</b><b class="c">心</b><b class="c">搜</b><b class="c">索</b><b class="c">的</b></div>
<div class="pv" style="top:662px"><b class="c">折</b><b class="c">中</b><b class="c">方</b><b class="c">案</b><b class="c">。</b><b class="c">需</b><b class="c">要</b><b class="c">设</b><b class="c">定</b><b class="c">一</b><b class="c">个</b></div>
<div class="pv" style="top:694px">beam size(<b class="c">束</b><b class="c">宽</b>)<b class="c">，</b><b class="c">当</b><b class="c">设</b><b class="c">为</b></div>
<div class="pv" style="top:726px">1<b class="c">时</b><b class="c">即</b><b class="c">为</b><b class="c">贪</b><b class="c">心</b><b class="c">搜</b><b class="c">索</b><b class="c">，</b><b class="c">当</b><b class="c">设</b></div>
<div id="g3tabs" class="abs"></div>
<div id="g3tab" class="abs"></div>
<svg style="left:1573px;top:47px" width="22" height="22" viewBox="0 0 22 22"><path d="M1 1 H17 V20 H4.500 L1 16.500 Z" fill="#eef1f4"/><path d="M1 16.500 H4.500 V20 Z" fill="#b8c0c8"/><path d="M3.500 4.500 H9 M3.500 8 H7 M3.500 11 H7 M3.500 14 H8" stroke="#c8cdd3" stroke-width="1.200"/><path d="M3.500 4.500 H9" stroke="#f0b44a" stroke-width="1.300"/><path d="M9 17 H14" stroke="#6fb0e8" stroke-width="1.200"/><circle cx="13" cy="10" r="4.300" fill="#ffffff" stroke="#3a4a5a" stroke-width="1.400"/><path d="M16.300 13.300 L20 17" stroke="#f0a030" stroke-width="2.200" stroke-linecap="round"/></svg>
<span class="t" style="left:1602px;top:53px;font-size:16px;color:#b4b4b4;letter-spacing:-0.185px">Preview <b class="c">报</b><b class="c">告</b>.md</span>
<svg style="left:1732px;top:53px" width="12" height="12" viewBox="0 0 12 12"><path d="M.8 .8 L11.200 11.200 M11.200 .8 L.8 11.200" stroke="#8a8a8a" stroke-width="1.400" fill="none"/></svg>
<svg style="left:1881px;top:55px" width="20" height="6" viewBox="0 0 20 6" fill="#c5c5c5"><circle cx="2.500" cy="3" r="1.400"/><circle cx="9" cy="3" r="1.400"/><circle cx="15.500" cy="3" r="1.400"/></svg>

<div id="panel" class="abs" style="border-top:1px solid #414141"></div>
<div class="abs" style="left:59px;top:829px;width:1860px;height:28px;background:#37373d"></div>
<div class="abs" style="left:79px;top:829px;width:1px;height:173px;background:#585858"></div>
<span class="t pt" style="left:86px;color:#e7e7e7;--cw:14.000px"><b class="c">问</b><b class="c">题</b></span>
<div class="abs" style="left:127px;top:770px;width:27px;height:22px;border-radius:11px;background:#4d4d4d"></div>
<span class="t" style="left:132px;top:774px;font-size:14px;color:#ffffff;letter-spacing:0.711px">58</span>
<div class="abs" style="left:84px;top:800px;width:33px;height:1px;background:#e7e7e7"></div>
<span class="t pt" style="left:180px;--cw:14.000px"><b class="c">输</b><b class="c">出</b></span>
<span class="t pt" style="left:238px;--cw:14.000px"><b class="c">终</b><b class="c">端</b></span>
<span class="t pt" style="left:296px;letter-spacing:-1.217px">JUPYTER</span>
<span class="t pt" style="left:379px;--cw:13.800px"><b class="c">调</b><b class="c">试</b><b class="c">控</b><b class="c">制</b><b class="c">台</b></span>
<svg style="left:75px;top:811px" width="14" height="10" viewBox="0 0 14 10"><path d="M1 1.500 L7 7.500 L13 1.500" stroke="#c5c5c5" stroke-width="1.400" fill="none"/></svg>
<svg style="left:98px;top:810px" width="18" height="12" viewBox="0 0 18 12"><rect x=".5" y=".5" width="17" height="11" rx="1" fill="none" stroke="#5f4234"/><path d="M3 9 V3 H4.600 L6.500 5.600 L8.400 3 H10 V9 H8.500 V5.300 L6.500 7.800 L4.500 5.300 V9 Z M12.600 3 H14.200 V6 H15.800 L13.400 9 L11 6 H12.600 Z" fill="#7d523d"/></svg>
<span class="t rowNone" style="left:124px;top:810px;letter-spacing:0.443px"><b class="c">报</b><b class="c">告</b>.md</span>
<div class="abs" style="left:196px;top:805px;width:30px;height:23px;border-radius:11.500px;background:#4d4d4d"></div>
<span class="t" style="left:203px;top:809px;font-size:14px;color:#ffffff;letter-spacing:0.211px">58</span>
<svg class="warn" style="left:115px;top:834.5px" viewBox="0 0 19 17"><path d="M9.500 1.500 L18 16 H1 Z" fill="none" stroke="#d9a20f" stroke-width="1.500" stroke-linejoin="round"/><path d="M9.500 6.500 V11.500 M9.500 13 V14.500" stroke="#d9a20f" stroke-width="1.500"/></svg>
<span class="t rowNone" style="left:142px;top:836.5px;letter-spacing:0.137px">MD033/no-inline-html: Inline HTML [Element: center]</span>
<span class="t row src" style="left:530px;top:836.5px;letter-spacing:0.184px">markdownlint<span class="lnk">(<u>MD033</u>)</span></span>
<span class="t row src" style="left:698px;top:836.5px;color:#b0b0b0;letter-spacing:-0.096px">[1, 3]</span>
<svg class="warn" style="left:115px;top:862px" viewBox="0 0 19 17"><path d="M9.500 1.500 L18 16 H1 Z" fill="none" stroke="#d9a20f" stroke-width="1.500" stroke-linejoin="round"/><path d="M9.500 6.500 V11.500 M9.500 13 V14.500" stroke="#d9a20f" stroke-width="1.500"/></svg>
<span class="t rowNone" style="left:142px;top:864px;letter-spacing:-0.029px">MD009/no-trailing-spaces: Trailing spaces [Expected: 0 or 2; Actual: 4]</span>
<span class="t row src" style="left:647px;top:864px;letter-spacing:0.184px">markdownlint<span class="lnk">(<u>MD009</u>)</span></span>
<span class="t row src" style="left:815px;top:864px;color:#b0b0b0;letter-spacing:-0.096px">[5, 1]</span>
<svg class="warn" style="left:115px;top:889.5px" viewBox="0 0 19 17"><path d="M9.500 1.500 L18 16 H1 Z" fill="none" stroke="#d9a20f" stroke-width="1.500" stroke-linejoin="round"/><path d="M9.500 6.500 V11.500 M9.500 13 V14.500" stroke="#d9a20f" stroke-width="1.500"/></svg>
<span class="t rowNone" style="left:142px;top:891.5px;letter-spacing:0.097px">MD012/no-multiple-blanks: Multiple consecutive blank lines [Expected: 1; Actual: 2]</span>
<span class="t row src" style="left:745px;top:891.5px;letter-spacing:0.184px">markdownlint<span class="lnk">(<u>MD012</u>)</span></span>
<span class="t row src" style="left:913px;top:891.5px;color:#b0b0b0;letter-spacing:-0.096px">[5, 1]</span>
<svg class="warn" style="left:115px;top:917px" viewBox="0 0 19 17"><path d="M9.500 1.500 L18 16 H1 Z" fill="none" stroke="#d9a20f" stroke-width="1.500" stroke-linejoin="round"/><path d="M9.500 6.500 V11.500 M9.500 13 V14.500" stroke="#d9a20f" stroke-width="1.500"/></svg>
<span class="t rowNone" style="left:142px;top:919px;letter-spacing:0.097px">MD012/no-multiple-blanks: Multiple consecutive blank lines [Expected: 1; Actual: 3]</span>
<span class="t row src" style="left:745px;top:919px;letter-spacing:0.184px">markdownlint<span class="lnk">(<u>MD012</u>)</span></span>
<span class="t row src" style="left:913px;top:919px;color:#b0b0b0;letter-spacing:-0.096px">[6, 1]</span>
<svg class="warn" style="left:115px;top:944.5px" viewBox="0 0 19 17"><path d="M9.500 1.500 L18 16 H1 Z" fill="none" stroke="#d9a20f" stroke-width="1.500" stroke-linejoin="round"/><path d="M9.500 6.500 V11.500 M9.500 13 V14.500" stroke="#d9a20f" stroke-width="1.500"/></svg>
<span class="t rowNone" style="left:142px;top:946.5px;letter-spacing:0.097px">MD012/no-multiple-blanks: Multiple consecutive blank lines [Expected: 1; Actual: 4]</span>
<span class="t row src" style="left:745px;top:946.5px;letter-spacing:0.184px">markdownlint<span class="lnk">(<u>MD012</u>)</span></span>
<span class="t row src" style="left:913px;top:946.5px;color:#b0b0b0;letter-spacing:-0.096px">[7, 1]</span>
<svg class="warn" style="left:115px;top:972px" viewBox="0 0 19 17"><path d="M9.500 1.500 L18 16 H1 Z" fill="none" stroke="#d9a20f" stroke-width="1.500" stroke-linejoin="round"/><path d="M9.500 6.500 V11.500 M9.500 13 V14.500" stroke="#d9a20f" stroke-width="1.500"/></svg>
<span class="t rowNone" style="left:142px;top:974px;letter-spacing:0.097px">MD012/no-multiple-blanks: Multiple consecutive blank lines [Expected: 1; Actual: 2]</span>
<span class="t row src" style="left:745px;top:974px;letter-spacing:0.184px">markdownlint<span class="lnk">(<u>MD012</u>)</span></span>
<span class="t row src" style="left:913px;top:974px;color:#b0b0b0;letter-spacing:-0.069px">[24, 1]</span>
<svg class="warn" style="left:115px;top:1000px" viewBox="0 0 19 17"><path d="M9.500 1.500 L18 16 H1 Z" fill="none" stroke="#d9a20f" stroke-width="1.500" stroke-linejoin="round"/><path d="M9.500 6.500 V11.500 M9.500 13 V14.500" stroke="#d9a20f" stroke-width="1.500"/></svg>
<div class="abs" style="left:1317px;top:766px;width:500px;height:30px;background:#3c3c3c"></div>
<span class="t" style="left:1323px;top:774px;font-size:15px;color:#888888;letter-spacing:0.147px"><b class="c">筛</b><b class="c">选</b><b class="c">器</b>(<b class="c">例</b><b class="c">如</b> text<b class="c">、</b>**/*.ts<b class="c">、</b>!**/node_modules/**)</span>
<svg style="left:1789px;top:772px" width="120" height="18" viewBox="0 0 120 18" fill="none" stroke="#c5c5c5" stroke-width="1.400"><path d="M1 1.500 H18 L11.500 9.500 V16 L7.500 14 V9.500 Z" stroke-linejoin="round"/><path d="M38.500 6.500 h9 v9 h-9 z M41.500 6.500 v-4 h9.500 v9.500 h-3.500 M40.500 11 h5"/><path d="M73 11.500 L79 5.500 L85 11.500"/><path d="M101 3 L112 14 M112 3 L101 14" stroke-width="1.500"/></svg>
<div id="status" class="abs"></div>
<svg style="left:17px;top:1007px" width="52" height="17" viewBox="0 0 52 17" fill="none" stroke="#ffffff" stroke-width="1.300"><circle cx="9.500" cy="8.500" r="7.200"/><path d="M6.500 5.500 L12.500 11.500 M12.500 5.500 L6.500 11.500"/><path d="M43.500 1.500 L51 15.500 H36 Z" stroke-linejoin="round"/><path d="M43.500 6.500 V11 M43.500 12.500 V14"/></svg>
<span class="t sb" style="left:38px;letter-spacing:-0.406px">0</span>
<span class="t sb" style="left:73px;letter-spacing:-0.148px">58</span>
<svg style="left:1555px;top:1006px" width="19" height="18" viewBox="0 0 19 18" fill="none" stroke="#ffffff" stroke-width="1.400"><path d="M7.500 6 l3.500 -3.500 a2.800 2.800 0 0 1 4 4 l-3.500 3.500 z M7.500 6 l-3 3 a2.800 2.800 0 0 0 4 4 l3 -3 M4.500 13 L1 16.500 M13 2 L16 .5 M15.500 4.500 L18 3"/></svg>
<span class="t sb" style="left:1577px;letter-spacing:-0.481px">Jupyter <b class="c">服</b><b class="c">务</b><b class="c">器</b>: <b class="c">本</b><b class="c">地</b></span>
<span class="t sb" style="left:1738px;--cw:14.954px;letter-spacing:-0.224px"><b class="c">单</b><b class="c">元</b><b class="c">格</b> 74/77</span>
<svg style="left:1846px;top:1006px" width="56" height="18" viewBox="0 0 56 18" fill="none" stroke="#ffffff" stroke-width="1.300"><circle cx="6" cy="8" r="2.800"/><path d="M1 17 c0 -4 2 -6 5 -6 s5 2 5 6 M7.500 1 H17 V8.500 H14 L12 11 V8.500"/><path d="M40.500 14 c2 -2 2 -3 2 -6 a5 5 0 0 1 10 0 c0 3 0 4 2 6 z M45.500 16 a2 2 0 0 0 4 0"/></svg>
<div id="taskbar" class="abs"></div>
<div class="abs" style="left:677px;top:1029px;width:61px;height:50px;background:#4a5660"></div>
<div class="run" style="left:372px;width:51px"></div>
<div class="run" style="left:496px;width:51px"></div>
<div class="run" style="left:620px;width:51px"></div>
<div class="run" style="left:677px;width:61px"></div>
<div class="run" style="left:744px;width:51px"></div>
<!-- tray -->
<svg style="left:1407px;top:1043px" width="21" height="18" viewBox="0 0 32 26"><rect x=".5" y=".5" width="31" height="18" fill="#f4f4f4" stroke="#bdbdbd"/><path d="M12 19 H20 V22.500 H24 V24.500 H8 V22.500 H12 Z" fill="#8d8d8d"/><text x="16" y="14" text-anchor="middle" font-family="Liberation Sans, sans-serif" font-size="11" font-style="italic" fill="#444">S&gt;G</text></svg>
<svg style="left:1437px;top:1045px" width="21" height="16" viewBox="0 0 21 16"><path d="M0 1 H4 L6.500 10 L9 3 H12 L14.500 10 L17 1 H21 L16.500 15 H12.500 L10.500 9 L8.500 15 H4.500 Z" fill="#c8431c"/><path d="M2 0 H19 L17.500 2.500 H3.500 Z" fill="#e25a24"/></svg>
<svg style="left:1467px;top:1043px" width="21" height="21" viewBox="0 0 21 21"><rect width="21" height="21" fill="#f3f6f9"/><path d="M15.500 8 A6.500 5.500 0 1 0 5.500 13.500 L5 16 L8 14.800 A8 7 0 0 0 11 15" fill="none" stroke="#2b8ff0" stroke-width="1.800" stroke-linecap="round"/><circle cx="15" cy="11" r="1.300" fill="#f0a52a"/><circle cx="17.500" cy="14" r="1.300" fill="#f0a52a"/><circle cx="14" cy="16" r="1.300" fill="#f0a52a"/></svg>
<svg style="left:1497px;top:1043px" width="22" height="22" viewBox="0 0 22 22"><path d="M1 4 C5 3.500 8 2 10 .5 C12 2 15 3.500 19 4 C19 11 17 16.500 10 20 C3 16.500 1 11 1 4 Z" fill="#ffffff" stroke="#2a8de8" stroke-width="1.800"/><path d="M4.500 8 C8 6 12 6 16 7.500 L11 10 L13 12 L6 15 L9 11.500 Z" fill="#2a8de8"/><circle cx="16.500" cy="16.500" r="5" fill="#2fb344"/><path d="M13.500 16.500 H19.500" stroke="#fff" stroke-width="1.800"/></svg>
<svg style="left:1527px;top:1044px" width="22" height="20" viewBox="0 0 32 28"><ellipse cx="11.500" cy="10" rx="11" ry="9.500" fill="#3cb034"/><path d="M4 17 L3 22 L9 19 Z" fill="#3cb034"/><ellipse cx="22" cy="18" rx="9.500" ry="8" fill="#e4e4e4"/><path d="M27 24 L29 27.500 L23 25.500 Z" fill="#e4e4e4"/></svg>
<svg style="left:1557px;top:1043px" width="22" height="22" viewBox="0 0 22 22"><path d="M1 3.500 C5 3.500 7.500 2 9.500 .5 C11.500 2 14 3.500 18 3.500 C18 11 16 16.500 9.500 20 C3 16.500 1 11 1 3.500 Z" fill="#ffffff" stroke="#1a1a1a" stroke-width="1"/><path d="M9.500 .5 V20 M1 10 H18" stroke="#1a1a1a" stroke-width="1.600"/><circle cx="16.500" cy="16.500" r="4.800" fill="#2e8b57"/><path d="M14 16.500 L16 18.500 L19 14.800" stroke="#fff" stroke-width="1.400" fill="none"/></svg>
<svg style="left:1587px;top:1046px" width="22" height="14" viewBox="0 0 22 14" fill="none" stroke="#ffffff" stroke-width="1.300"><rect x="4.500" y="3" width="15" height="9.500"/><path d="M19.500 6 H21.500 V9.500 H19.500"/><rect x="6" y="4.500" width="5" height="6.500" fill="#fff" stroke="none"/><path d="M2.500 0 V2.500 M4.500 0 V2.500 M1 2.500 H6 V5 a2.500 2.500 0 0 1 -5 0 Z M3.500 7.500 V10" stroke-width="1.100"/></svg>
<svg style="left:1619px;top:1044px" width="20" height="19" viewBox="0 0 20 19" fill="none" stroke="#ffffff"><path d="M1 17 A16 16 0 0 1 17 1" stroke-width="1" opacity=".55"/><path d="M5.500 17.500 A11.500 11.500 0 0 1 17 6" stroke-width="1.300"/><path d="M10 17.500 A7 7 0 0 1 17 10.500" stroke-width="1.300"/><circle cx="16" cy="16.500" r="1.700" fill="#fff" stroke="none"/></svg>
<svg style="left:1646px;top:1045px" width="20" height="16" viewBox="0 0 20 16" fill="none" stroke="#ffffff" stroke-width="1.200"><path d="M.6 5 H3.500 L7.500 1 V15 L3.500 11 H.6 Z"/><path d="M11.500 4.500 L18.500 11.500 M18.500 4.500 L11.500 11.500"/></svg>
<svg style="left:1677px;top:1044px" width="17" height="18" viewBox="0 0 17 18" fill="none" stroke="#ffffff" stroke-width="1.900"><path d="M1.500 4.500 H15.500 V12 H1.500 Z M8.500 .5 V17.500"/></svg>
<svg style="left:1702px;top:1039px" width="30" height="30" viewBox="0 0 30 30" fill="none"><circle cx="15" cy="15" r="12" fill="#3b3f42"/><circle cx="15" cy="15" r="13" stroke="#c98a2c" stroke-width="1.800"/><path d="M15 2 A13 13 0 0 1 27.500 18" stroke="#2f8fd8" stroke-width="1.800"/><path d="M8 4 A13 13 0 0 1 15 2" stroke="#252a2e" stroke-width="2"/></svg>
<span class="t" style="left:1707px;top:1046px;font-size:15.500px;color:#ffffff;letter-spacing:1.375px">91</span>
<span class="t tr" style="left:1761px;top:1036px;letter-spacing:0.472px">11:26</span>
<span class="t tr" style="left:1739px;top:1060px;letter-spacing:0.642px">2021/10/26</span>
<svg style="left:1845px;top:1041px" width="28" height="22" viewBox="0 0 28 22" fill="#ffffff"><path d="M0 2 H2.500 V22 H0 Z M25.500 0 H28 V22 H25.500 Z M5 4 L14 15 L23 2.500 V7.500 L14 20 L5 9 Z M5 4 H7.500 V22 H5 Z M20.500 5 H23 V22 H20.500 Z"/></svg>
<svg style="left:1903px;top:1044px" width="17" height="20" viewBox="0 0 17 20" fill="none" stroke="#ffffff" stroke-width="1.300"><path d="M17 1 H1 V14.500 H8 V19 L12.500 14.500 H17"/></svg>
<!-- start -->
<svg style="left:19px;top:1044px" width="21" height="21" viewBox="0 0 21 21" fill="#ffffff"><path d="M0 3 L8.500 1.800 V10 H0 Z M9.500 1.600 L21 0 V10 H9.500 Z M0 11 H8.500 V19.200 L0 18 Z M9.500 11 H21 V21 L9.500 19.400 Z"/></svg>
<!-- search -->
<svg style="left:78px;top:1044px" width="22" height="22" viewBox="0 0 22 22" fill="none" stroke="#ffffff" stroke-width="1.500"><circle cx="13.500" cy="8" r="6.500"/><path d="M9 13 L1 21"/></svg>
<!-- cortana -->
<svg style="left:138px;top:1043px" width="22" height="22" viewBox="0 0 22 22" fill="none" stroke="#ffffff" stroke-width="2.600"><circle cx="11" cy="11" r="8.500"/></svg>
<!-- task view -->
<svg style="left:198px;top:1043px" width="22" height="22" viewBox="0 0 22 22" fill="none" stroke="#ffffff" stroke-width="1.400"><path d="M1 1 V4.500 M1 17.500 V21 M13.500 1 V4.500 M13.500 17.500 V21 M1 3 H13.500 M1 19 H13.500 M1 6.500 H13.500 V15.500 H1 Z M19 1 V5 M19 8 V13 M19 16 V21"/></svg>
<!-- explorer -->
<svg style="left:259px;top:1041px" width="28" height="24" viewBox="0 0 28 24"><path d="M0 2.500 a1.500 1.500 0 0 1 1.500 -1.500 H10 L12.500 4 H26.500 a1.500 1.500 0 0 1 1.500 1.500 V22 H0 Z" fill="#e8b33f"/><path d="M0 6 H28 V22.500 a1 1 0 0 1 -1 1 H1 a1 1 0 0 1 -1 -1 Z" fill="#fbd466"/><path d="M5.500 14 H22.500 V23.500 H5.500 Z" fill="#2f86d6"/><path d="M9.500 18 H18.500 V23.500 H9.500 Z" fill="#fbd466"/></svg>
<!-- chrome -->
<svg style="left:320px;top:1039px" width="29" height="29" viewBox="0 0 29 29"><circle cx="14.500" cy="14.500" r="14" fill="#d9a441"/><path d="M14.500 14.500 L2.400 7.500 A14 14 0 0 1 26.600 7.500 Z" fill="#b9572f"/><path d="M14.500 14.500 L2.400 7.500 A14 14 0 0 0 14.500 28.500 L20 18 Z" fill="#2f7f57"/><path d="M14.500 7.500 H26.600 A14 14 0 0 1 14.500 28.500 L20.500 18 Z" fill="#e2b94d"/><circle cx="14.500" cy="14.500" r="6.300" fill="#f1f1f1"/><circle cx="14.500" cy="14.500" r="5" fill="#4a90e8"/></svg>
<!-- wechat -->
<svg style="left:381px;top:1040px" width="32" height="28" viewBox="0 0 32 28"><ellipse cx="11.500" cy="10" rx="11" ry="9.500" fill="#3cb034"/><path d="M4 17 L3 22 L9 19 Z" fill="#3cb034"/><ellipse cx="22" cy="18" rx="9.500" ry="8" fill="#e4e4e4"/><path d="M27 24 L29 27.500 L23 25.500 Z" fill="#e4e4e4"/><circle cx="8" cy="7" r="1.100" fill="#1f6f1b"/><circle cx="15" cy="7" r="1.100" fill="#1f6f1b"/><circle cx="19" cy="16" r="1" fill="#8a8a8a"/><circle cx="25" cy="16" r="1" fill="#8a8a8a"/></svg>
<!-- wecom -->
<svg style="left:444px;top:1040px" width="32" height="30" viewBox="0 0 32 30" fill="none"><path d="M23 9.500 A11 9.500 0 1 0 6 19.500 L5.500 23.500 L10 21.500 A12 10 0 0 0 17 22" stroke="#2b8ff0" stroke-width="2.800" stroke-linecap="round"/><circle cx="24" cy="13.500" r="2" fill="#38b44a"/><circle cx="29" cy="19" r="2" fill="#2b8ff0"/><circle cx="19" cy="20" r="2.200" fill="#f0a52a"/><circle cx="24" cy="25" r="2" fill="#e8602c"/><path d="M24 13.500 L24 25 M19 20 L29 19" stroke="#f0a52a" stroke-width="1.300"/></svg>
<!-- q browser -->
<svg style="left:505px;top:1039px" width="32" height="31" viewBox="0 0 32 31"><circle cx="15" cy="15" r="11" fill="none" stroke="#2d95f3" stroke-width="7"/><path d="M4 17 A11 11 0 0 0 15 26" fill="none" stroke="#9ed2fb" stroke-width="7"/><path d="M14 29.500 a4.500 4.500 0 0 1 1.500 -8.700 a6 6 0 0 1 11 1 a4 4 0 0 1 1.500 7.700 Z" fill="#ffffff"/></svg>
<!-- bird -->
<svg style="left:568px;top:1039px" width="31" height="31" viewBox="0 0 31 31"><rect width="31" height="31" rx="4.500" fill="#3c9bf5"/><path d="M3.500 9 C8 8.500 12 9.500 14.500 13 C16 8 20 5.500 25 6.500 C22 8.500 21.500 12 21.500 14 L27.500 14.500 C24 16 22 19 17.500 20.500 L20.500 27.500 C17 26 14.500 23.500 13.500 21 C10 20 7.500 17.500 7 14.500 L12 16 C9.500 13.500 7 11 3.500 9 Z" fill="#ffffff"/></svg>
<!-- vscode -->
<svg style="left:628px;top:1038px" width="33" height="33" viewBox="0 0 100 100"><path d="M71 2 L96 14 V86 L71 98 L28 59 L10 73 L2 69 V31 L10 27 L28 41 Z M71 29 L41 50 L71 71 Z" fill="#1b7fd0"/><path d="M71 2 L96 14 V86 L71 98 Z" fill="#2c9cf2"/></svg>
<!-- python terminal -->
<svg style="left:693px;top:1039px" width="34" height="32" viewBox="0 0 34 32"><rect x="0" y="2" width="27" height="22" fill="#2c3238"/><rect x="0" y="2" width="27" height="2.500" fill="#2f7fc4"/><path d="M3 9 H11 M3 13 H9 M3 17 H12" stroke="#4aa36a" stroke-width="1.200"/><g transform="translate(14,11) scale(1.050)"><path d="M9.300 0.500 C5.500 0.500 5.700 2.200 5.700 2.200 V4.700 H9.500 V5.500 H3.500 C3.500 5.500 0.500 5.200 0.500 9.500 C0.500 13.800 3.100 13.600 3.100 13.600 H4.800 V11.500 C4.800 11.500 4.700 9 7.300 9 H11.200 C11.200 9 13.600 9 13.600 6.700 V2.900 C13.600 2.900 14 0.500 9.300 0.500 Z" fill="#3d7fb6"/><path d="M9.700 18.500 C13.500 18.500 13.300 16.800 13.300 16.800 V14.300 H9.500 V13.500 H15.500 C15.500 13.500 18.500 13.800 18.500 9.500 C18.500 5.200 15.900 5.400 15.900 5.400 H14.200 V7.500 C14.200 7.500 14.300 10 11.700 10 H7.800 C7.800 10 5.400 10 5.400 12.300 V16.100 C5.400 16.100 5 18.500 9.700 18.500 Z" fill="#fdd24a"/></g></svg>
<!-- s>g monitor -->
<svg style="left:753px;top:1042px" width="32" height="26" viewBox="0 0 32 26"><rect x=".5" y=".5" width="31" height="18" fill="#ffffff" stroke="#bdbdbd"/><path d="M12 19 H20 V22.500 H24 V24.500 H8 V22.500 H12 Z" fill="#8d8d8d"/><text x="16" y="14.500" text-anchor="middle" font-family="Liberation Sans, sans-serif" font-size="11.500" font-style="italic" fill="#333">S&gt;G</text></svg>

<div id="tk" class="abs" style="box-shadow:0 0 0 1px #141414">
  <div id="tktitle" class="abs"></div>
  <!-- feather -->
  <svg style="left:13px;top:8px" width="14" height="20" viewBox="0 0 14 20"><path d="M12.800 .3 C7 1 2 6 1.800 12.500 L3 15.500 C9 12.500 13 7 12.800 .3 Z" fill="#4a86cf"/><path d="M12.800 .3 C10.500 1.500 5 6 3.200 12.500 L3.600 14.500 C6 9 9.500 4.500 12.800 .3 Z" fill="#8fc0f0"/><path d="M12 1.500 C9 5 6 9.500 4 14" stroke="#16325e" stroke-width="1.300" fill="none"/><path d="M4.300 12.500 L2.800 19.500" stroke="#1a1a1a" stroke-width="1.500"/></svg>
  <span class="t tkl" style="left:35px;top:11px;-webkit-text-stroke:0;--cw:15.000px"><b class="c">简</b><b class="c">易</b><b class="c">对</b><b class="c">联</b><b class="c">生</b><b class="c">成</b><b class="c">器</b></span>
  <svg style="left:596px;top:12px" width="132" height="14" viewBox="0 0 132 14" fill="none" stroke="#000000" stroke-width="1.100"><path d="M1 6.500 H13"/><path d="M59.500 1.500 H70.500 V12.500 H59.500 Z"/><path d="M118 1 L130 13 M130 1 L118 13"/></svg>
  <div class="tktxt" style="top:50px;height:131px"></div>
  <div class="tkbtn" style="left:250px"></div>
  <div class="tkbtn" style="left:375px"></div>
  <span class="t tkl" style="left:285px;top:248px;--cw:15.000px"><b class="c">点</b><b class="c">我</b></span>
  <span class="t tkl" style="left:388px;top:248px;--cw:15.391px;letter-spacing:0.670px"><b class="c">清</b><b class="c">空</b><b class="c">输</b><b class="c">入</b>~</span>
  <div class="tktxt" style="top:312px;height:131px"></div>
  <span class="t tkl" style="left:57px;top:508px;font-size:16px;-webkit-text-stroke:0;--cw:16.113px;letter-spacing:0.188px"><b class="c">输</b><b class="c">入</b><b class="c">最</b><b class="c">大</b><b class="c">长</b><b class="c">度</b><b class="c">为</b>32<b class="c">，</b><b class="c">能</b><b class="c">识</b><b class="c">别</b><b class="c">的</b><b class="c">词</b><b class="c">汇</b><b class="c">大</b><b class="c">约</b><b class="c">在</b>9000<b class="c">个</b><b class="c">，</b><b class="c">输</b><b class="c">入</b><b class="c">一</b><b class="c">些</b><b class="c">偏</b><b class="c">僻</b><b class="c">字</b><b class="c">可</b><b class="c">能</b><b class="c">会</b><b class="c">出</b><b class="c">错</b><b class="c">。</b>---<b class="c">陈</b><b class="c">凡</b><b class="c">亮</b></span>
  <!-- mouse cursor -->
  <svg style="left:195px;top:241px" width="13" height="21" viewBox="0 0 13 21"><path d="M.7 .8 V16.500 L4.300 13 L6.800 19.300 L9 18.400 L6.500 12.300 H11.700 Z" fill="#ffffff" stroke="#000000" stroke-width="1" stroke-linejoin="miter"/></svg>
</div>
</body>
</html>
